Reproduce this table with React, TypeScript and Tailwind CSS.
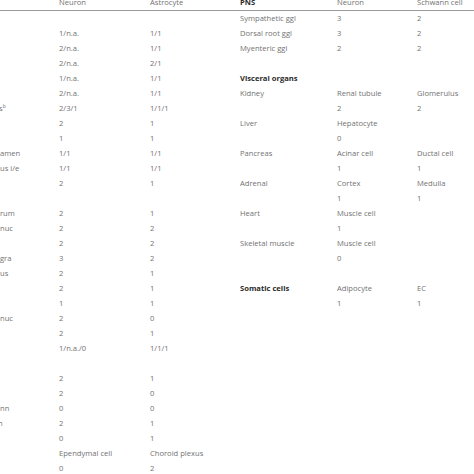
import React from "react";

type Row = [React.ReactNode, string, string, React.ReactNode, string, string, boolean?];

const rows: Row[] = [
  ["", "", "", "Sympathetic ggl", "3", "2"],
  ["", "1/n.a.", "1/1", "Dorsal root ggl", "3", "2"],
  ["", "2/n.a.", "1/1", "Myenteric ggl", "2", "2"],
  ["", "2/n.a.", "2/1", "", "", ""],
  ["", "1/n.a.", "1/1", "Visceral organs", "", "", true],
  ["", "2/n.a.", "1/1", "Kidney", "Renal tubule", "Glomerulus"],
  [<span className="-ml-[1px]">s<sup className="text-[5px]">b</sup></span>, "2/3/1", "1/1/1", "", "2", "2"],
  ["", "2", "1", "Liver", "Hepatocyte", ""],
  ["", "1", "1", "", "0", ""],
  ["amen", "1/1", "1/1", "Pancreas", "Acinar cell", "Ductal cell"],
  ["us i/e", "1/1", "1/1", "", "1", "1"],
  ["", "2", "1", "Adrenal", "Cortex", "Medulla"],
  ["", "", "", "", "1", "1"],
  ["rum", "2", "1", "Heart", "Muscle cell", ""],
  ["nuc", "2", "2", "", "1", ""],
  ["", "2", "2", "Skeletal muscle", "Muscle cell", ""],
  ["gra", "3", "2", "", "0", ""],
  ["us", "2", "1", "", "", ""],
  ["", "2", "1", "Somatic cells", "Adipocyte", "EC", true],
  ["", "1", "1", "", "1", "1"],
  ["nuc", "2", "0", "", "", ""],
  ["", "2", "1", "", "", ""],
  ["", "1/n.a./0", "1/1/1", "", "", ""],
  ["", "", "", "", "", ""],
  [<span className="-ml-[4px]">s</span>, "2", "1", "", "", ""],
  ["", "2", "0", "", "", ""],
  ["nn", "0", "0", "", "", ""],
  [<span className="-ml-[2px]">n</span>, "2", "1", "", "", ""],
  ["", "0", "1", "", "", ""],
  ["", "Ependymal cell", "Choroid plexus", "", "", ""],
  ["", "0", "2", "", "", ""],
];

const cols = "grid grid-cols-[59px_91px_90px_97px_80px_57px]";

export default function App() {
  return (
    <div
      className="w-[474px] h-[474px] overflow-hidden bg-white text-[#727272] text-[7.6px] leading-none"
      style={{ fontFamily: '"Open Sans", "Noto Sans", sans-serif' }}
    >
      <div className={`${cols} -mt-[4px] h-[15px] items-center border-b border-[#9a9a9a]`}>
        <div />
        <div>Neuron</div>
        <div>Astrocyte</div>
        <div className="font-bold text-[#2b2b2b]">PNS</div>
        <div>Neuron</div>
        <div className="whitespace-nowrap">Schwann cell</div>
      </div>
      {rows.map((r, i) => (
        <div key={i} className={`${cols} h-[15.03px] items-center`}>
          <div className="whitespace-nowrap overflow-visible">{r[0]}</div>
          <div className="whitespace-nowrap">{r[1]}</div>
          <div className="whitespace-nowrap">{r[2]}</div>
          <div className={`whitespace-nowrap ${r[6] ? "font-bold text-[#2b2b2b]" : ""}`}>{r[3]}</div>
          <div className="whitespace-nowrap">{r[4]}</div>
          <div className="whitespace-nowrap">{r[5]}</div>
        </div>
      ))}
    </div>
  );
}
